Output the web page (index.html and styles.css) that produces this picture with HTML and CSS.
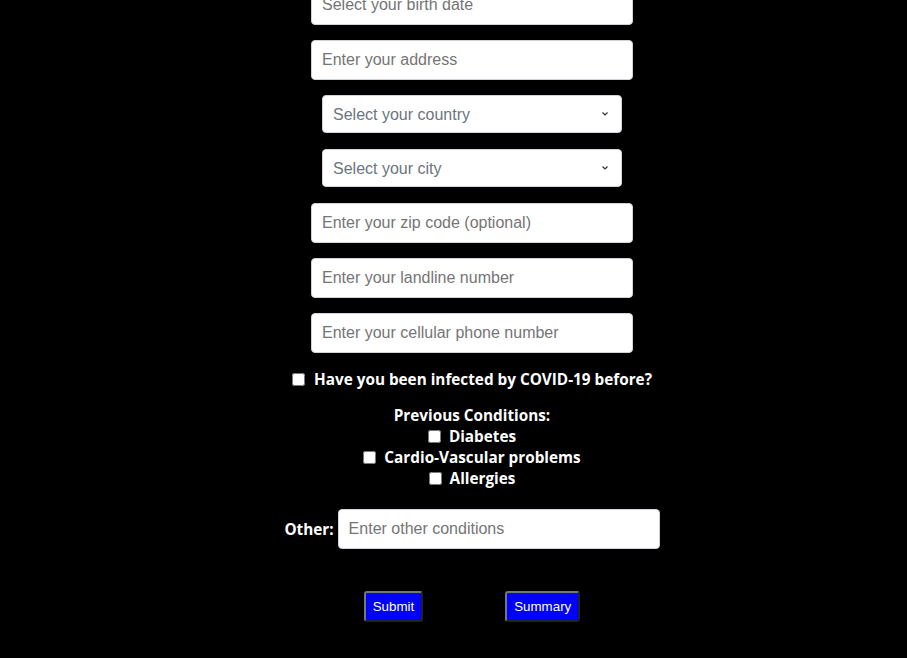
FILE: index.html
```html
<!DOCTYPE html>
<html>
<head>
<meta charset="utf-8">
<link rel="stylesheet" href="styles.css">
</head>
<body>
<form class="form">
  <input class="field first" type="text" placeholder="Select your birth date">
  <input class="field" type="text" placeholder="Enter your address">
  <div class="select-wrap">
    <select class="select"><option>Select your country</option></select>
    <svg class="chev" width="6" height="4" viewBox="0 0 6 4"><path d="M0.5 0.5 L3 3 L5.5 0.5" fill="none" stroke="#333" stroke-width="1.2"/></svg>
  </div>
  <div class="select-wrap">
    <select class="select"><option>Select your city</option></select>
    <svg class="chev" width="6" height="4" viewBox="0 0 6 4"><path d="M0.5 0.5 L3 3 L5.5 0.5" fill="none" stroke="#333" stroke-width="1.2"/></svg>
  </div>
  <input class="field" type="text" placeholder="Enter your zip code (optional)">
  <input class="field" type="text" placeholder="Enter your landline number">
  <input class="field" type="text" placeholder="Enter your cellular phone number">

  <label class="covid"><input type="checkbox" class="cb"> Have you been infected by COVID-19 before?</label>

  <div class="conditions">
    <div class="cond-title">Previous Conditions:</div>
    <label class="cond"><input type="checkbox" class="cb"> Diabetes</label>
    <label class="cond"><input type="checkbox" class="cb"> Cardio-Vascular problems</label>
    <label class="cond"><input type="checkbox" class="cb"> Allergies</label>
  </div>

  <div class="other">
    <label class="other-label">Other:</label>
    <input class="field other-field" type="text" placeholder="Enter other conditions">
  </div>

  <div class="buttons">
    <button type="button" class="btn">Submit</button>
    <button type="button" class="btn">Summary</button>
  </div>
</form>
</body>
</html>
```
FILE: styles.css
```css
html, body {
  margin: 0;
  padding: 0;
  background: #000;
  height: 100%;
  overflow: hidden;
}

.form {
  display: flex;
  flex-direction: column;
  align-items: center;
  padding-left: 37px;
  margin-top: -15px;
  font-family: "Open Sans", "Liberation Sans", sans-serif;
  color: #fff;
}

.field {
  box-sizing: border-box;
  width: 322px;
  height: 40px;
  margin: 0 0 15px 0;
  padding: 0 10px;
  border: 1px solid #ced4da;
  border-radius: 4px;
  background: #fff;
  font-family: "Liberation Sans", Arial, sans-serif;
  font-size: 16px;
  color: #495057;
}

.field::placeholder {
  color: #757575;
}

.select-wrap {
  position: relative;
  width: 300px;
  height: 38px;
  margin-bottom: 16px;
}

.select {
  box-sizing: border-box;
  width: 300px;
  height: 38px;
  padding: 0 10px;
  border: 1px solid #ced4da;
  border-radius: 4px;
  background: #fff;
  font-family: "Liberation Sans", Arial, sans-serif;
  font-size: 16px;
  color: #6c757d;
  appearance: none;
  -webkit-appearance: none;
}

.chev {
  position: absolute;
  right: 14px;
  top: 17px;
}

.covid {
  display: flex;
  align-items: center;
  gap: 9px;
  margin-top: 1px;
  font-weight: 700;
  font-size: 15.3px;
  line-height: 21px;
}

.cb {
  width: 13px;
  height: 13px;
  margin: 0;
}

.conditions {
  display: flex;
  flex-direction: column;
  align-items: center;
  margin-top: 15px;
  font-weight: 700;
  font-size: 15.3px;
  line-height: 21px;
}

.cond {
  display: flex;
  align-items: center;
  gap: 8px;
}

.other {
  display: flex;
  align-items: center;
  gap: 4px;
  margin-top: 20px;
}

.other-label {
  font-weight: 700;
  font-size: 15.3px;
}

.other-field {
  margin: 0;
}

.buttons {
  display: flex;
  gap: 82px;
  margin-top: 42px;
}

.btn {
  box-sizing: border-box;
  height: 31px;
  padding: 0 7px;
  background: #0000ff;
  color: #fff;
  border: 2px outset #767676;
  border-radius: 3px;
  font-family: "Liberation Sans", Arial, sans-serif;
  font-size: 13.333px;
}
```
